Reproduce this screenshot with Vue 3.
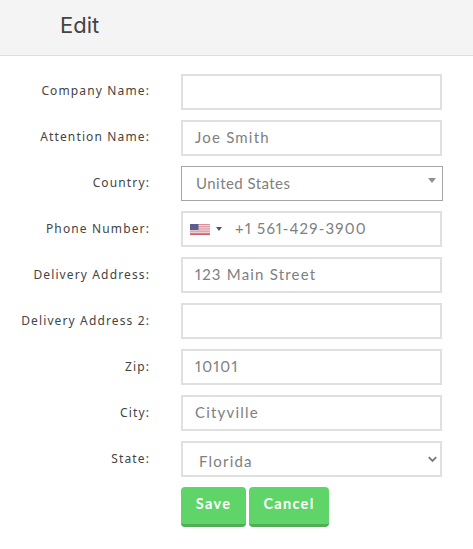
<script setup>
const rows = [
  { label: 'Company Name:', kind: 'input', value: '' },
  { label: 'Attention Name:', kind: 'input', value: 'Joe Smith' },
  { label: 'Country:', kind: 'country', value: 'United States' },
  { label: 'Phone Number:', kind: 'phone', value: '+1 561-429-3900' },
  { label: 'Delivery Address:', kind: 'input', value: '123 Main Street' },
  { label: 'Delivery Address 2:', kind: 'input', value: '' },
  { label: 'Zip:', kind: 'input', value: '10101' },
  { label: 'City:', kind: 'input', value: 'Cityville' },
  { label: 'State:', kind: 'state', value: 'Florida' },
]
const stripes = [0, 2, 4, 6, 8, 10]
</script>

<template>
  <div class="page">
    <header class="head"><h1>Edit</h1></header>
    <form class="form" @submit.prevent>
      <div v-for="row in rows" :key="row.label" class="row" :class="'row-' + row.kind">
        <label class="label">{{ row.label }}</label>
        <div v-if="row.kind === 'country'" class="country">
          <span>{{ row.value }}</span>
          <i class="caret"></i>
        </div>
        <div v-else-if="row.kind === 'phone'" class="field phone">
          <svg class="flag" width="20" height="11" viewBox="0 0 20 12" preserveAspectRatio="none">
            <rect width="20" height="12" fill="#f3e6e8" />
            <rect v-for="y in stripes" :key="y" x="0" :y="y" width="20" height="1" fill="#d98a95" />
            <rect x="0" y="10.5" width="20" height="1.5" fill="#c9606f" />
            <rect width="8.5" height="6.5" fill="#5a5e90" />
          </svg>
          <i class="mini-caret"></i>
          <span class="phone-num">{{ row.value }}</span>
        </div>
        <div v-else-if="row.kind === 'state'" class="field state">
          <span>{{ row.value }}</span>
          <svg class="chev" width="9" height="7" viewBox="0 0 9 7">
            <path d="M0.8 1.2 L4.5 5 L8.2 1.2" fill="none" stroke="#777" stroke-width="1.8" />
          </svg>
        </div>
        <div v-else class="field"><span>{{ row.value }}</span></div>
      </div>
      <div class="actions">
        <button type="button" class="btn save">Save</button>
        <button type="button" class="btn cancel">Cancel</button>
      </div>
    </form>
  </div>
</template>

<style>
html, body { margin: 0; background: #fff; }
</style>

<style scoped>
.page {
  width: 473px;
  height: 549px;
  overflow: hidden;
  background: #fff;
  font-family: "Lato", sans-serif;
}
.head {
  height: 55px;
  background: #f4f4f4;
  border-bottom: 1px solid #dedede;
  padding-left: 60px;
  display: flex;
  align-items: center;
}
.head h1 {
  margin: 0 0 6px;
  font: 400 22px "Inter", sans-serif;
  color: #444;
}
.form {
  padding-top: 18px;
  display: flex;
  flex-direction: column;
}
.row {
  display: grid;
  grid-template-columns: 150px 262px;
  column-gap: 31px;
  height: 36px;
  margin-bottom: 10px;
  align-items: center;
}
.row-country { height: 35px; }
.label {
  text-align: right;
  font: 400 12px "Noto Sans", sans-serif;
  letter-spacing: 1.13px;
  color: #444;
  padding-bottom: 2px;
}
.row:nth-child(-n+2) .label { padding-bottom: 4px; }
.field {
  box-sizing: border-box;
  width: 261px;
  height: 36px;
  border: 2px solid #e0e0e0;
  background: #fff;
  display: flex;
  align-items: center;
  padding: 0 0 2px 12px;
  font-size: 15px;
  letter-spacing: 1.2px;
  font-variant-numeric: proportional-nums;
  color: #808080;
}
.country {
  box-sizing: border-box;
  width: 262px;
  height: 35px;
  border: 1px solid #a6a6a6;
  display: flex;
  align-items: center;
  padding: 0 0 2px 14px;
  position: relative;
  font-size: 15px;
  letter-spacing: 0.45px;
  color: #808080;
}
.caret {
  position: absolute;
  right: 6px;
  top: 11px;
  border-left: 4px solid transparent;
  border-right: 4px solid transparent;
  border-top: 5px solid #909090;
}
.phone { padding-left: 7px; }
.flag { flex: none; margin-top: 2px; }
.mini-caret {
  margin-left: 6px;
  margin-top: 2px;
  border-left: 3px solid transparent;
  border-right: 3px solid transparent;
  border-top: 4px solid #555;
}
.phone-num { margin-left: 13px; }
.state { padding: 3px 0 0 16px; position: relative; }
.chev { position: absolute; right: 3px; top: 13px; }
.actions {
  display: flex;
  gap: 3px;
  padding-left: 181px;
}
.btn {
  box-sizing: border-box;
  height: 40px;
  border: 0;
  border-bottom: 3px solid #52ad57;
  border-radius: 4px;
  background: #5fd468;
  color: #fff;
  font: 700 14.5px "Lato", sans-serif;
  letter-spacing: 1.3px;
  padding: 0 0 5px;
}
.save { width: 65px; }
.cancel { width: 80px; }
</style>
